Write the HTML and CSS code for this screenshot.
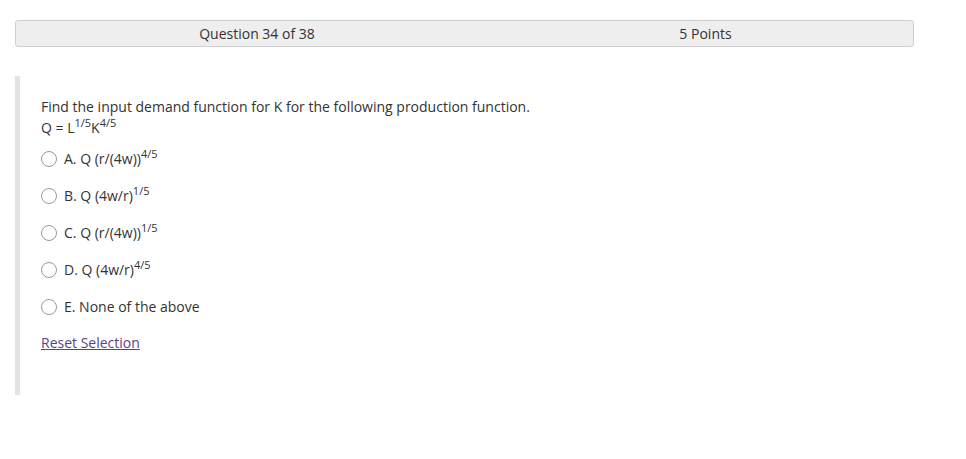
FILE: index.html
```html
<!DOCTYPE html>
<html lang="en">
<head>
<meta charset="utf-8">
<title>Question 34 of 38</title>
<link rel="stylesheet" href="styles.css">
</head>
<body>
<div class="header">
  <div class="hcell hleft">Question 34 of 38</div>
  <div class="hcell hright">5 Points</div>
</div>
<div class="question">
  <p class="stem">Find the input demand function for K for the following production function.<br>Q = L<sup>1/5</sup>K<sup>4/5</sup></p>
  <ul class="options">
    <li class="opt"><span class="radio"></span><span class="label">A. Q (r/(4w))<sup>4/5</sup></span></li>
    <li class="opt"><span class="radio"></span><span class="label">B. Q (4w/r)<sup>1/5</sup></span></li>
    <li class="opt"><span class="radio"></span><span class="label">C. Q (r/(4w))<sup>1/5</sup></span></li>
    <li class="opt"><span class="radio"></span><span class="label">D. Q (4w/r)<sup>4/5</sup></span></li>
    <li class="opt"><span class="radio"></span><span class="label">E. None of the above</span></li>
  </ul>
  <a class="reset" href="#">Reset Selection</a>
</div>
</body>
</html>
```

FILE: styles.css
```css
html, body {
  margin: 0;
  padding: 0;
  background: #fff;
}
body {
  font-family: "Open Sans", "Liberation Sans", sans-serif;
  font-size: 14px;
  color: #333;
}
.header {
  margin: 20px 0 0 15px;
  width: 897px;
  height: 25px;
  border: 1px solid #cfcfcf;
  border-radius: 3px;
  background: #eee;
  display: grid;
  grid-template-columns: 482px 1fr;
}
.hcell {
  display: flex;
  align-items: center;
  justify-content: center;
  font-size: 14px;
  color: #333;
}
.question {
  margin: 29px 0 0 15px;
  border-left: 5px solid #e3e3e3;
  padding: 20px 0 42px 21px;
  display: flex;
  flex-direction: column;
  align-items: flex-start;
}
.stem {
  margin: 0;
  line-height: 21px;
}
sup {
  font-size: 11px;
  line-height: 0;
  vertical-align: 0;
  position: relative;
  top: -6px;
}
.options {
  list-style: none;
  margin: 2px 0 0 0;
  padding: 0;
}
.opt {
  height: 37px;
  display: flex;
  align-items: center;
}
.radio {
  width: 14px;
  height: 14px;
  border: 1px solid #9a9a9a;
  border-radius: 50%;
  background: #fff;
  margin-right: 7px;
  flex: none;
}
.label {
  line-height: 20px;
}
.reset {
  margin-top: 7.5px;
  line-height: 20px;
  color: #5b3f8c;
  text-decoration: underline;
}
```
